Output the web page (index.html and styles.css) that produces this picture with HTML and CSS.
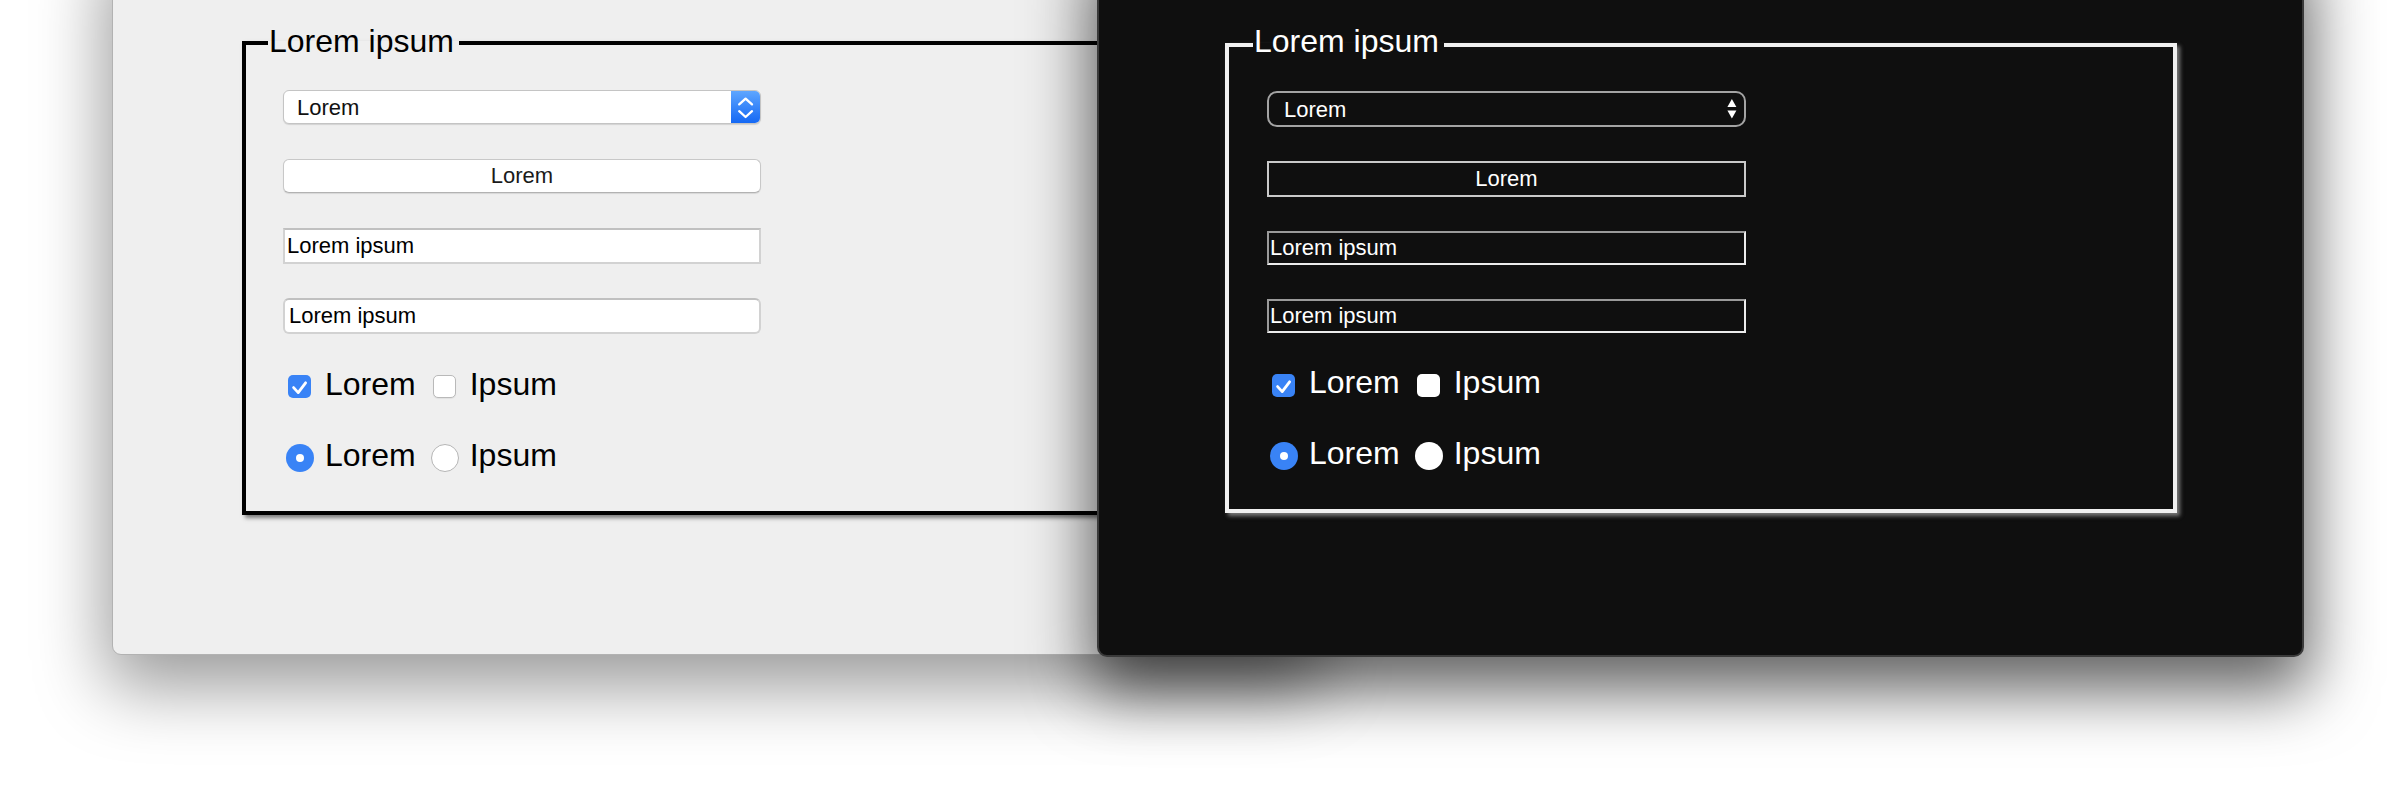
FILE: index.html
```html
<!DOCTYPE html>
<html lang="en">
<head>
<meta charset="utf-8">
<title>Form controls – light and dark</title>
<link rel="stylesheet" href="styles.css">
</head>
<body>
<div class="desk">
  <div class="win win-light">
    <fieldset class="fs fs-light">
      <legend class="lg">Lorem ipsum</legend>
      <div class="fs-body">
        <div class="sel sel-light">
          <select class="sel-field"><option>Lorem</option></select>
          <span class="sel-btn">
            <svg width="29" height="34" viewBox="0 0 29 34" aria-hidden="true">
              <polyline points="8.2,13.4 14.6,7.6 21,13.4" fill="none" stroke="#fff" stroke-width="2.3" stroke-linecap="round" stroke-linejoin="round"/>
              <polyline points="8.2,20.2 14.6,26 21,20.2" fill="none" stroke="#fff" stroke-width="2.3" stroke-linecap="round" stroke-linejoin="round"/>
            </svg>
          </span>
        </div>
        <button class="btn btn-light" type="button">Lorem</button>
        <input class="inp inp-light" type="text" value="Lorem ipsum">
        <input class="inp inp-light inp-round" type="text" value="Lorem ipsum">
        <div class="opts opts-1">
          <span class="box on">
            <svg width="23" height="23" viewBox="0 0 23 23" aria-hidden="true"><polyline points="5.6,12.6 10.2,17.6 17.6,7.8" fill="none" stroke="#fff" stroke-width="2.8" stroke-linecap="round" stroke-linejoin="round"/></svg>
          </span>
          <span class="lbl">Lorem</span>
          <span class="box off-light"></span>
          <span>Ipsum</span>
        </div>
        <div class="opts opts-2">
          <span class="rad on"></span>
          <span class="lbl">Lorem</span>
          <span class="rad off-light"></span>
          <span>Ipsum</span>
        </div>
      </div>
    </fieldset>
  </div>

  <div class="win win-dark">
    <fieldset class="fs fs-dark">
      <legend class="lg">Lorem ipsum</legend>
      <div class="fs-body">
        <div class="sel sel-dark">
          <select class="sel-field"><option>Lorem</option></select>
          <span class="sel-arrows">
            <svg width="10" height="20" viewBox="0 0 10 20" aria-hidden="true">
              <polygon points="0.4,8 4.9,0 9.4,8" fill="#fff"/>
              <polygon points="0.4,11.6 9.4,11.6 4.9,19.6" fill="#fff"/>
            </svg>
          </span>
        </div>
        <button class="btn btn-dark" type="button">Lorem</button>
        <input class="inp inp-dark" type="text" value="Lorem ipsum">
        <input class="inp inp-dark" type="text" value="Lorem ipsum">
        <div class="opts opts-1">
          <span class="box on">
            <svg width="23" height="23" viewBox="0 0 23 23" aria-hidden="true"><polyline points="5.6,12.6 10.2,17.6 17.6,7.8" fill="none" stroke="#fff" stroke-width="2.8" stroke-linecap="round" stroke-linejoin="round"/></svg>
          </span>
          <span class="lbl">Lorem</span>
          <span class="box off-dark"></span>
          <span>Ipsum</span>
        </div>
        <div class="opts opts-2">
          <span class="rad on"></span>
          <span class="lbl">Lorem</span>
          <span class="rad off-dark"></span>
          <span>Ipsum</span>
        </div>
      </div>
    </fieldset>
  </div>
</div>
</body>
</html>
```

FILE: styles.css
```css
* { box-sizing: border-box; }

html, body {
  margin: 0;
  padding: 0;
}

body {
  background: #ffffff;
  font-family: "Liberation Sans", Arial, Helvetica, sans-serif;
}

.desk {
  position: relative;
  width: 2408px;
  height: 803px;
  overflow: hidden;
  background: #ffffff;
}

/* windows on the desktop */
.win {
  position: absolute;
  top: -60px;
}

.win-light {
  left: 112px;
  width: 1200px;
  height: 715px;
  background: #efefef;
  border: 1px solid #b2b2b2;
  border-radius: 0 0 9px 9px;
  box-shadow: 0 26px 70px 6px rgba(0, 0, 0, 0.40);
  padding: 82px 0 0 129px;
}

.win-dark {
  left: 1097px;
  width: 1207px;
  height: 717px;
  background: #0f0f0f;
  border: 2px solid #3a3a3a;
  border-radius: 0 0 10px 10px;
  box-shadow: 0 28px 64px 6px rgba(0, 0, 0, 0.62);
  padding: 81px 0 0 126px;
}

/* fieldset */
.fs {
  margin: 0;
  border: 4px solid;
  min-inline-size: 0;
  box-shadow: 3px 3px 4px #7a7a7a;
}

.fs-light {
  width: 1000px;
  border-color: #000000;
  padding: 27px 0 33px 22px;
  color: #000000;
}

.fs-dark {
  width: 952px;
  border-color: #f0f0f0;
  padding: 24px 0 32.5px 24px;
  color: #ffffff;
}

.lg {
  font-size: 32px;
  line-height: 37px;
  padding: 0 5px 3px 1px;
}

.fs-dark .lg {
  padding-bottom: 7px;
}

.fs-body {
  display: flex;
  flex-direction: column;
  align-items: flex-start;
  padding-left: 15px;
}

.fs-dark .fs-body {
  padding-left: 14px;
}

/* select */
.sel {
  display: flex;
  align-items: stretch;
  overflow: hidden;
}

.sel-light {
  width: 478px;
  height: 34px;
  background: #ffffff;
  border: 1px solid #c4c4c4;
  border-radius: 6px;
  box-shadow: 0 1px 1px rgba(0, 0, 0, 0.12);
}

.sel-dark {
  width: 479px;
  height: 36px;
  border: 2px solid #a3a3a3;
  border-radius: 10px;
}

.sel-field {
  flex: 1;
  appearance: none;
  -webkit-appearance: none;
  border: 0;
  margin: 0;
  background: transparent;
  font-family: "Liberation Sans", Arial, Helvetica, sans-serif;
  font-size: 22px;
  color: inherit;
  height: 100%;
  outline: none;
  padding: 0 0 0 13px;
}

.sel-light .sel-field { color: #111111; }
.sel-dark .sel-field { color: #ffffff; padding-left: 15px; }

.sel-btn {
  width: 29px;
  flex: none;
  display: flex;
  background: linear-gradient(#5ea6ff, #1468f4);
}

.sel-arrows {
  flex: none;
  display: flex;
  align-items: center;
  padding-right: 7px;
}

/* button */
.btn {
  margin: 0;
  font-family: "Liberation Sans", Arial, Helvetica, sans-serif;
  font-size: 22px;
  padding: 0;
}

.btn-light {
  width: 478px;
  height: 34px;
  margin-top: 35px;
  background: #ffffff;
  color: #1a1a1a;
  border: 1px solid #c8c8c8;
  border-bottom-color: #b2b2b2;
  border-radius: 6px;
  box-shadow: 0 1px 1px rgba(0, 0, 0, 0.10);
}

.btn-dark {
  width: 479px;
  height: 36px;
  margin-top: 34px;
  background: transparent;
  color: #ffffff;
  border: 2px solid #c9c9c9;
  border-radius: 0;
}

/* text inputs */
.inp {
  margin: 0;
  font-family: "Liberation Sans", Arial, Helvetica, sans-serif;
  font-size: 22px;
  outline: none;
}

.inp-light {
  width: 478px;
  height: 36px;
  margin-top: 35px;
  background: #ffffff;
  color: #000000;
  border: 2px solid #d2d2d2;
  border-top-color: #c0c0c0;
  padding: 0 2px;
}

.inp-round {
  margin-top: 34px;
  border-radius: 6px;
  padding: 0 4px;
}

.inp-dark {
  width: 479px;
  height: 34px;
  margin-top: 34px;
  background: transparent;
  color: #ffffff;
  border: 2px solid;
  border-color: #9a9a9a #ececec #ececec #9a9a9a;
  padding: 0 1px;
}

/* checkbox / radio rows */
.opts {
  display: flex;
  align-items: center;
  height: 46px;
  font-size: 32px;
}

.fs-light .opts-1 { margin-top: 27px; }
.fs-light .opts-2 { margin-top: 25px; }
.fs-dark .opts-1 { margin-top: 26.5px; }
.fs-dark .opts-2 { margin-top: 25px; }

.lbl {
  margin-right: 12px;
}

.box {
  flex: none;
  width: 23px;
  height: 23px;
  border-radius: 5px;
  margin: 5px 14px 0 5px;
  display: flex;
}

.box.on {
  background: #3983f6;
}

.box.off-light {
  background: #ffffff;
  border: 1px solid #b9b9b9;
  box-shadow: 0 1px 1px rgba(0, 0, 0, 0.06);
}

.box.off-dark {
  background: #ffffff;
}

.rad {
  flex: none;
  width: 28px;
  height: 28px;
  border-radius: 50%;
  margin: 5px 11px 0 3px;
  display: flex;
  align-items: center;
  justify-content: center;
}

.rad.on {
  background: #3983f6;
}

.rad.on::after {
  content: "";
  width: 8px;
  height: 8px;
  border-radius: 50%;
  background: #ffffff;
}

.rad.off-light {
  background: #ffffff;
  border: 1px solid #b5b5b5;
}

.rad.off-dark {
  background: #ffffff;
}
```
